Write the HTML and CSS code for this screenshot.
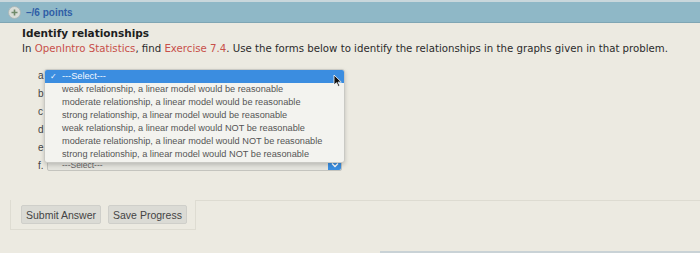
FILE: index.html
```html
<!DOCTYPE html>
<html>
<head>
<meta charset="utf-8">
<link rel="stylesheet" href="styles.css">
</head>
<body>
<div class="topbar">
  <svg class="plus" width="13" height="13" viewBox="0 0 13 13"><circle cx="6.5" cy="6.5" r="6" fill="#d9ddd8" stroke="#a9b4b4" stroke-width="0.8"/><path d="M6.5 3.5v6M3.5 6.5h6" stroke="#6f8a6a" stroke-width="1.6"/></svg>
  <span class="points">–/6 points</span>
</div>
<div class="content">
  <div class="title">Identify relationships</div>
  <div class="intro">In <span class="link">OpenIntro Statistics</span>, find <span class="link">Exercise 7.4</span>. Use the forms below to identify the relationships in the graphs given in that problem.</div>
  <div class="form">
    <div class="row"><span class="letter">a</span><div class="sel"><span class="arrow"></span></div></div>
    <div class="row"><span class="letter">b</span><div class="sel"><span class="arrow"></span></div></div>
    <div class="row"><span class="letter">c</span><div class="sel"><span class="arrow"></span></div></div>
    <div class="row"><span class="letter">d</span><div class="sel"><span class="arrow"></span></div></div>
    <div class="row"><span class="letter">e</span><div class="sel"><span class="arrow"></span></div></div>
    <div class="row"><span class="letter">f.</span><div class="sel"><span class="seltext">---Select---</span><span class="arrow"><svg width="8" height="6" viewBox="0 0 8 6"><path d="M1 1.5l3 3 3-3" fill="none" stroke="#fff" stroke-width="1.4"/></svg></span></div></div>
    <div class="menu">
      <div class="opt active"><span class="check">✓</span>---Select---</div>
      <div class="opt">weak relationship, a linear model would be reasonable</div>
      <div class="opt">moderate relationship, a linear model would be reasonable</div>
      <div class="opt">strong relationship, a linear model would be reasonable</div>
      <div class="opt">weak relationship, a linear model would NOT be reasonable</div>
      <div class="opt">moderate relationship, a linear model would NOT be reasonable</div>
      <div class="opt">strong relationship, a linear model would NOT be reasonable</div>
      <svg class="cursor" width="9" height="13" viewBox="0 0 9 13"><path d="M1 1v10l2.5-2.3 1.8 3.8 1.5-.7-1.8-3.7H8.3z" fill="#111" stroke="#fff" stroke-width="0.8"/></svg>
    </div>
  </div>
</div>
<div class="footer">
  <div class="btnbox">
    <button class="btn">Submit Answer</button>
    <button class="btn">Save Progress</button>
  </div>
  <div class="rest"></div>
</div>
<div class="bottomline"></div>
</body>
</html>
```
FILE: styles.css
```css
html, body {
  margin: 0;
  padding: 0;
}
body {
  width: 700px;
  height: 253px;
  background: #eceae1;
  font-family: "DejaVu Sans", Verdana, sans-serif;
  color: #2a2a2a;
  overflow: hidden;
  position: relative;
}
.topbar {
  height: 20px;
  border-top: 2px solid #c9d7dc;
  border-bottom: 1px solid #7fa6b4;
  background: #8fb8c7;
  display: flex;
  align-items: center;
  padding-left: 8px;
  gap: 5px;
}
.points {
  font-family: "Liberation Sans", Arial, sans-serif;
  font-weight: bold;
  font-size: 10px;
  color: #2f5ea6;
}
.content {
  padding: 0 0 0 22px;
}
.title {
  font-weight: bold;
  font-size: 10.5px;
  color: #1e1e1e;
  margin-top: 4px;
  line-height: 13px;
}
.intro {
  font-size: 10.2px;
  line-height: 12px;
  margin-top: 3px;
  color: #2b2b2b;
  white-space: nowrap;
}
.link {
  color: #c8504a;
}
.form {
  position: relative;
  margin-top: 11px;
  width: 320px;
}
.row {
  height: 18px;
  display: flex;
  align-items: center;
}
.letter {
  width: 25px;
  padding-left: 16px;
  box-sizing: border-box;
  font-family: "Liberation Sans", Arial, sans-serif;
  font-size: 10px;
  color: #444;
}
.sel {
  width: 294px;
  height: 10px;
  border: 1px solid #c4c4be;
  border-radius: 2px;
  background: #e4e4de;
  display: flex;
  align-items: center;
  justify-content: flex-end;
}
.seltext {
  flex: 1;
  font-family: "Liberation Sans", Arial, sans-serif;
  font-size: 8.5px;
  color: #666;
  padding-left: 14px;
}
.arrow {
  width: 13px;
  height: 10px;
  background: #3a8ee0;
  border-radius: 0 2px 2px 0;
  display: flex;
  align-items: center;
  justify-content: center;
}
.menu {
  position: absolute;
  left: 22px;
  top: 3px;
  width: 299px;
  padding-bottom: 1px;
  background: #f3f3ef;
  border: 1px solid #c9c9c4;
  border-radius: 3px;
  box-shadow: 0 2px 4px rgba(0,0,0,0.18);
  font-family: "Liberation Sans", Arial, sans-serif;
  font-size: 9.2px;
  color: #555;
}
.opt {
  height: 13px;
  line-height: 13px;
  padding-left: 17px;
  white-space: nowrap;
}
.opt.active {
  height: 13px;
  line-height: 13px;
  background: #3b8de0;
  color: #f4f8ff;
  padding-left: 5px;
  border-radius: 2px 2px 0 0;
}
.check {
  display: inline-block;
  width: 12px;
  font-size: 8px;
}
.cursor {
  position: absolute;
  right: 2px;
  top: 4px;
}
.footer {
  margin-top: 26px;
  display: flex;
  height: 30px;
  margin-left: 10px;
}
.btnbox {
  width: 186px;
  box-sizing: border-box;
  border: 1px solid #dedcd2;
  border-top: none;
  display: flex;
  align-items: flex-start;
  gap: 7px;
  padding: 5px 0 0 10px;
}
.rest {
  flex: 1;
  border-top: 1px solid #dddbd1;
}
.btn {
  font-family: "Liberation Sans", Arial, sans-serif;
  font-size: 10.5px;
  color: #444;
  background: #dbdbd5;
  border: 1px solid #cfcfca;
  border-radius: 2px;
  height: 19px;
  padding: 0 4px;
  margin: 0;
}
.bottomline {
  position: absolute;
  left: 380px;
  right: 0;
  bottom: 0;
  height: 2px;
  background: #c9d2d6;
}
```
